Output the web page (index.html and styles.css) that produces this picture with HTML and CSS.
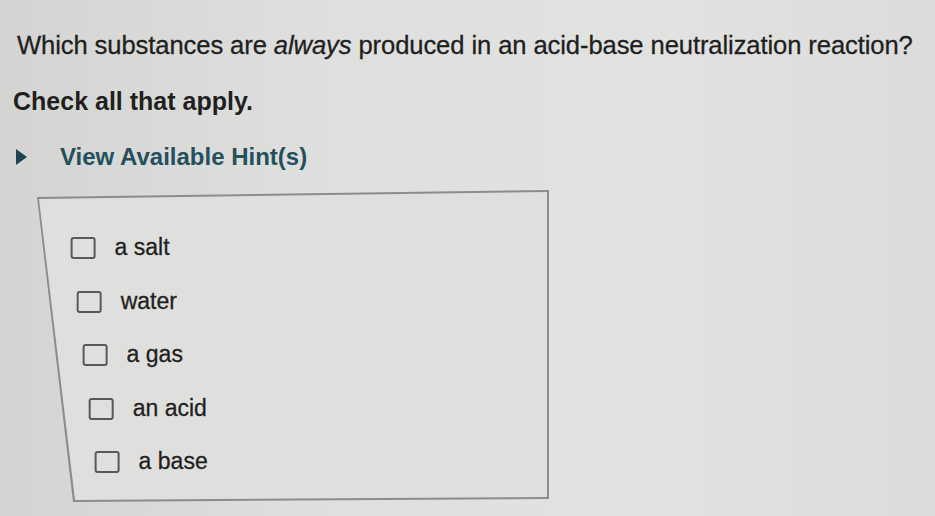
FILE: index.html
```html
<!DOCTYPE html>
<html lang="en">
<head>
    <meta charset="UTF-8">
    <meta name="viewport" content="width=device-width, initial-scale=1.0">
    <title>Acid-Base Question</title>
    <link rel="stylesheet" href="styles.css">
</head>
<body>
    <div class="page">
        <p class="question">Which substances are <em>always</em> produced in an acid-base neutralization reaction?</p>

        <p class="instruction">Check all that apply.</p>

        <div class="hint">
            <span class="hint-arrow"></span>
            <span class="hint-label">View Available Hint(s)</span>
        </div>

        <!-- Answer choices -->
        <div class="answers">
            <div class="answers-inner">
                <ul class="options">
                    <li class="option"><span class="option-body"><span class="checkbox"></span>a salt</span></li>
                    <li class="option"><span class="option-body"><span class="checkbox"></span>water</span></li>
                    <li class="option"><span class="option-body"><span class="checkbox"></span>a gas</span></li>
                    <li class="option"><span class="option-body"><span class="checkbox"></span>an acid</span></li>
                    <li class="option"><span class="option-body"><span class="checkbox"></span>a base</span></li>
                </ul>
            </div>
        </div>
    </div>
</body>
</html>
```

FILE: styles.css
```css
* {
    margin: 0;
    padding: 0;
    box-sizing: border-box;
}

body {
    font-family: "Liberation Sans", Arial, sans-serif;
    color: #1f1f1f;
    background: linear-gradient(90deg, #d4d5d2 0%, #dfe0dd 35%, #e2e3e0 70%, #dcdddb 100%);
    height: 516px;
    overflow: hidden;
}

.page {
    display: flex;
    flex-direction: column;
    align-items: flex-start;
    padding-top: 29px;
}

.question {
    font-size: 25.6px;
    line-height: 32px;
    padding-left: 17px;
    letter-spacing: -0.1px;
    -webkit-text-stroke: 0.3px #1f1f1f;
}

.question em {
    font-style: italic;
}

.instruction {
    font-size: 25px;
    font-weight: bold;
    line-height: 32px;
    padding-left: 13px;
    margin-top: 24px;
}

.hint {
    display: flex;
    align-items: center;
    margin-top: 24px;
    padding-left: 16px;
    color: #24505d;
}

.hint-arrow {
    width: 0;
    height: 0;
    border-top: 8px solid transparent;
    border-bottom: 8px solid transparent;
    border-left: 11px solid #1f4350;
}

.hint-label {
    font-size: 24px;
    font-weight: bold;
    line-height: 32px;
    margin-left: 33px;
}

.answers {
    margin-top: 17px;
    margin-left: 37px;
    width: 512px;
    height: 312px;
    padding: 2px;
    background: #8b8c8b;
    clip-path: polygon(0 7px, 100% 0, 100% calc(100% - 3px), 36px 100%);
}

.answers-inner {
    height: 100%;
    background: #dfe0dd;
    clip-path: polygon(0 7px, 100% 0, 100% calc(100% - 3px), 36px 100%);
}

.options {
    list-style: none;
    display: flex;
    flex-direction: column;
    gap: 20.6px;
    padding: 39px 0 0 31px;
    transform: skewX(6.4deg);
    transform-origin: 0 50px;
}

.option {
    height: 33px;
    display: flex;
    align-items: center;
}

.option-body {
    display: flex;
    align-items: center;
    gap: 19px;
    font-size: 23px;
    -webkit-text-stroke: 0.3px #1f1f1f;
    transform: skewX(-6.4deg);
}

.checkbox {
    width: 25px;
    height: 22px;
    border: 2px solid #575858;
    border-radius: 3px;
}
```
